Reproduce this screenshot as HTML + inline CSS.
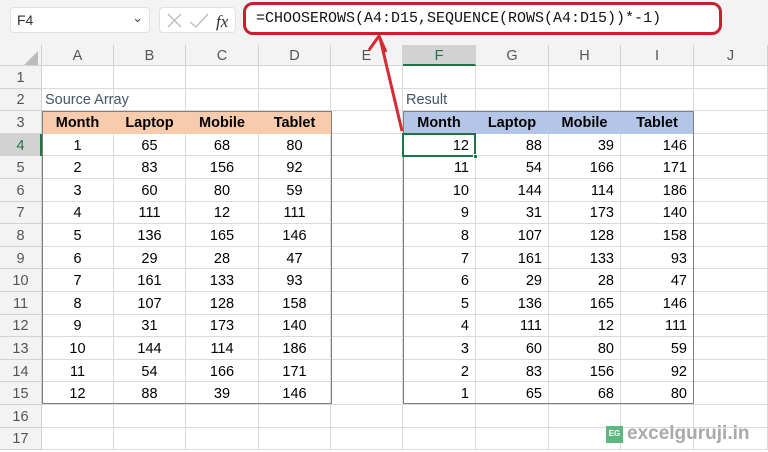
<!DOCTYPE html>
<html><head><meta charset="utf-8"><style>
*{margin:0;padding:0;box-sizing:border-box}
body{width:768px;height:452px;overflow:hidden;background:#fff;font-family:"Liberation Sans",Calibri,sans-serif;position:relative}
.top{position:absolute;left:0;top:0;width:768px;height:45px;background:#f3f3f3}
.nb{position:absolute;left:10px;top:7px;width:140px;height:26px;background:#fff;border:1px solid #e1e1e1;border-radius:4px;font-size:14px;color:#333;padding:4px 6px}
.fxb{position:absolute;left:159px;top:7px;width:77px;height:26px;background:#fff;border:1px solid #e1e1e1;border-radius:4px}
.fm{position:absolute;left:243px;top:2px;width:479px;height:33px;background:#fff;border:3px solid #c8202f;border-radius:10px;font-family:"Liberation Mono",monospace;font-size:15px;color:#111;padding:5px 0 0 10px}
.g{position:absolute;left:0;top:45px;display:grid;grid-template-columns:42px 72px 72px 73px 72px 72px 73px 73px 72px 73px 74px;grid-template-rows:21px repeat(17,22.6px);font-size:14.5px}
.g div{border-right:1px solid #dadada;border-bottom:1px solid #dadada;display:flex;align-items:center;justify-content:center;color:#000;white-space:nowrap;padding-top:2px}
.g .h{background:#f3f3f3;color:#555;border-color:#d2d2d2}
.g .r{background:#f3f3f3;color:#555;border-color:#d2d2d2}
.g .o{background:#f8cbad;font-weight:bold;border-bottom-color:#f8cbad;border-right-color:#f8cbad}
.g .b{background:#b4c6e7;font-weight:bold;border-bottom-color:#b4c6e7;border-right-color:#b4c6e7}
.g .n{justify-content:flex-end;padding-right:6px}
.g .t{justify-content:flex-start;padding-left:3px;color:#44546a}
.g .sel{background:#d2d2d2;color:#217346;border-bottom:2px solid #217346}
.g .rs{background:#d2d2d2;color:#217346}
.box{position:absolute;border:1px solid #7f7f7f}
</style></head><body>
<div class="top"></div>
<div class="nb">F4<span style="position:absolute;right:6px;top:2px;font-size:13px;color:#444">&#8964;</span></div>
<div class="fxb">
<svg width="77" height="26" style="position:absolute;left:0;top:0"><path d="M8 6 L21 19 M21 6 L8 19" stroke="#bbb" stroke-width="1.3" fill="none"/><path d="M30 14 L36 19 L48 6" stroke="#bbb" stroke-width="1.3" fill="none"/><text x="56" y="19" font-family="Liberation Serif" font-style="italic" font-size="17" fill="#333">fx</text></svg>
</div>
<div class="fm">=CHOOSEROWS(A4:D15,SEQUENCE(ROWS(A4:D15))*-1)</div>
<div class="g">
<div class="h"><svg width="14" height="14" style="margin:4px 0 0 20px"><path d="M14 0 L14 14 L0 14Z" fill="#bbb"/></svg></div><div class="h">A</div><div class="h">B</div><div class="h">C</div><div class="h">D</div><div class="h">E</div><div class="h sel">F</div><div class="h">G</div><div class="h">H</div><div class="h">I</div><div class="h">J</div>
<div class="r">1</div><div></div><div></div><div></div><div></div><div></div><div></div><div></div><div></div><div></div><div></div>
<div class="r">2</div><div class="t">Source Array</div><div></div><div></div><div></div><div></div><div class="t">Result</div><div></div><div></div><div></div><div></div>
<div class="r">3</div><div class="o">Month</div><div class="o">Laptop</div><div class="o">Mobile</div><div class="o">Tablet</div><div></div><div class="b">Month</div><div class="b">Laptop</div><div class="b">Mobile</div><div class="b">Tablet</div><div></div>
<div class="r rs">4</div><div>1</div><div>65</div><div>68</div><div>80</div><div></div><div class="n">12</div><div class="n">88</div><div class="n">39</div><div class="n">146</div><div></div>
<div class="r">5</div><div>2</div><div>83</div><div>156</div><div>92</div><div></div><div class="n">11</div><div class="n">54</div><div class="n">166</div><div class="n">171</div><div></div>
<div class="r">6</div><div>3</div><div>60</div><div>80</div><div>59</div><div></div><div class="n">10</div><div class="n">144</div><div class="n">114</div><div class="n">186</div><div></div>
<div class="r">7</div><div>4</div><div>111</div><div>12</div><div>111</div><div></div><div class="n">9</div><div class="n">31</div><div class="n">173</div><div class="n">140</div><div></div>
<div class="r">8</div><div>5</div><div>136</div><div>165</div><div>146</div><div></div><div class="n">8</div><div class="n">107</div><div class="n">128</div><div class="n">158</div><div></div>
<div class="r">9</div><div>6</div><div>29</div><div>28</div><div>47</div><div></div><div class="n">7</div><div class="n">161</div><div class="n">133</div><div class="n">93</div><div></div>
<div class="r">10</div><div>7</div><div>161</div><div>133</div><div>93</div><div></div><div class="n">6</div><div class="n">29</div><div class="n">28</div><div class="n">47</div><div></div>
<div class="r">11</div><div>8</div><div>107</div><div>128</div><div>158</div><div></div><div class="n">5</div><div class="n">136</div><div class="n">165</div><div class="n">146</div><div></div>
<div class="r">12</div><div>9</div><div>31</div><div>173</div><div>140</div><div></div><div class="n">4</div><div class="n">111</div><div class="n">12</div><div class="n">111</div><div></div>
<div class="r">13</div><div>10</div><div>144</div><div>114</div><div>186</div><div></div><div class="n">3</div><div class="n">60</div><div class="n">80</div><div class="n">59</div><div></div>
<div class="r">14</div><div>11</div><div>54</div><div>166</div><div>171</div><div></div><div class="n">2</div><div class="n">83</div><div class="n">156</div><div class="n">92</div><div></div>
<div class="r">15</div><div>12</div><div>88</div><div>39</div><div>146</div><div></div><div class="n">1</div><div class="n">65</div><div class="n">68</div><div class="n">80</div><div></div>
<div class="r">16</div><div></div><div></div><div></div><div></div><div></div><div></div><div></div><div></div><div></div><div></div>
<div class="r">17</div><div></div><div></div><div></div><div></div><div></div><div></div><div></div><div></div><div></div><div></div>
</div>
<div class="box" style="left:42px;top:111px;width:290px;height:293px"></div>
<div class="box" style="left:403px;top:111px;width:291px;height:293px"></div>
<div style="position:absolute;left:40px;top:134px;width:2px;height:22px;background:#217346"></div>
<div style="position:absolute;left:402px;top:133px;width:74px;height:24px;border:2px solid #217346"></div>
<div style="position:absolute;left:473px;top:154px;width:5px;height:5px;background:#217346;border:1px solid #fff"></div>
<svg width="768" height="452" style="position:absolute;left:0;top:0"><path d="M402 131 L380 38" stroke="#d62a35" stroke-width="3" fill="none"/><path d="M369 50 L379 36 L386 52" stroke="#d62a35" stroke-width="3" fill="none" stroke-linejoin="round"/></svg>
<div style="position:absolute;left:606px;top:426px;width:17px;height:17px;background:#5cb87f;color:#fff;font-size:8px;font-weight:bold;text-align:center;line-height:15px">EG</div>
<div style="position:absolute;left:627px;top:423px;font-size:19px;font-weight:bold;color:#aaa">excelguruji.in</div>
</body></html>
